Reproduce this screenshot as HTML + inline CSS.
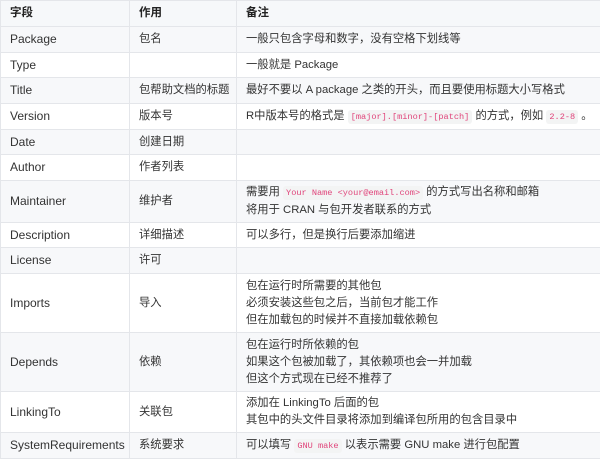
<!DOCTYPE html><html><head><meta charset="utf-8"><style>
body{margin:0;background:#fff;width:600px;height:458px;overflow:hidden}
table{border-collapse:collapse;font-family:"Liberation Sans","Noto Sans CJK SC",sans-serif;font-size:11.3px;color:#333;table-layout:fixed;width:601px;margin-left:0}
td,th{border:1px solid #e4e6ea;padding:0 0 0 9px;line-height:17px;text-align:left;vertical-align:middle;white-space:nowrap;overflow:hidden}
th{font-weight:bold;background:#f6f8fa;color:#222;font-size:11.5px}
td:first-child{font-size:12px}
tr:nth-child(even) td{background:#f7f8fa}
code{font-family:"Liberation Mono",monospace;font-size:8.6px;color:#e0457b;background:#f3f4f4;padding:2px 3px;border-radius:3px}
</style></head><body>
<table>
<colgroup><col style="width:129px"><col style="width:107px"><col></colgroup>
<tr style="height:26px"><th>字段</th><th>作用</th><th>备注</th></tr>
<tr style="height:26px"><td>Package</td><td>包名</td><td>一般只包含字母和数字，没有空格下划线等</td></tr>
<tr style="height:25px"><td>Type</td><td></td><td>一般就是 Package</td></tr>
<tr style="height:26px"><td>Title</td><td>包帮助文档的标题</td><td>最好不要以 A package 之类的开头，而且要使用标题大小写格式</td></tr>
<tr style="height:26px"><td>Version</td><td>版本号</td><td>R中版本号的格式是 <code>[major].[minor]-[patch]</code> 的方式，例如 <code>2.2-8</code> 。</td></tr>
<tr style="height:25px"><td>Date</td><td>创建日期</td><td></td></tr>
<tr style="height:26px"><td>Author</td><td>作者列表</td><td></td></tr>
<tr style="height:42px"><td>Maintainer</td><td>维护者</td><td>需要用 <code>Your Name &lt;your@email.com&gt;</code> 的方式写出名称和邮箱<br>将用于 CRAN 与包开发者联系的方式</td></tr>
<tr style="height:25px"><td>Description</td><td>详细描述</td><td>可以多行，但是换行后要添加缩进</td></tr>
<tr style="height:26px"><td>License</td><td>许可</td><td></td></tr>
<tr style="height:59px"><td>Imports</td><td>导入</td><td>包在运行时所需要的其他包<br>必须安装这些包之后，当前包才能工作<br>但在加载包的时候并不直接加载依赖包</td></tr>
<tr style="height:59px"><td>Depends</td><td>依赖</td><td>包在运行时所依赖的包<br>如果这个包被加载了，其依赖项也会一并加载<br>但这个方式现在已经不推荐了</td></tr>
<tr style="height:41px"><td>LinkingTo</td><td>关联包</td><td>添加在 LinkingTo 后面的包<br>其包中的头文件目录将添加到编译包所用的包含目录中</td></tr>
<tr style="height:26px"><td>SystemRequirements</td><td>系统要求</td><td>可以填写 <code>GNU make</code> 以表示需要 GNU make 进行包配置</td></tr>
</table>
</body></html>
